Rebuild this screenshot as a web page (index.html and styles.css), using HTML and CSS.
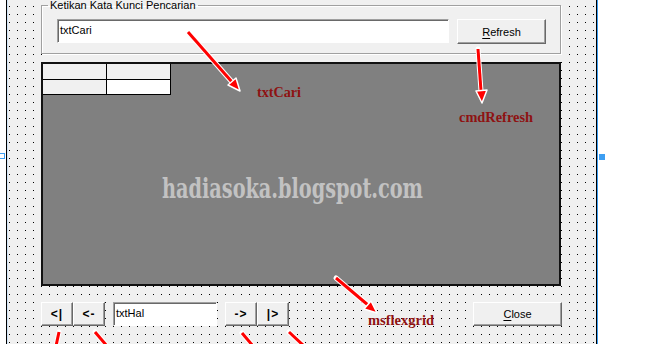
FILE: index.html
```html
<!DOCTYPE html>
<html lang="id">
<head>
    <meta charset="UTF-8">
    <title>frmCari - Design</title>
    <link rel="stylesheet" href="styles.css">
</head>
<body>
    <div class="designer">
        <div class="form">
            <!-- frame pencarian -->
            <fieldset class="frame">
                <legend>Ketikan Kata Kunci Pencarian</legend>
                <div class="search-row">
                    <div class="textbox txt-cari">txtCari</div>
                    <button class="btn btn-wide"><u>R</u>efresh</button>
                </div>
            </fieldset>

            <!-- msflexgrid -->
            <div class="flexgrid">
                <div class="cells">
                    <div class="cell fixed"></div>
                    <div class="cell fixed"></div>
                    <div class="cell fixed"></div>
                    <div class="cell"></div>
                </div>
            </div>

            <!-- navigasi halaman -->
            <div class="nav-row">
                <div class="btn-group">
                    <button class="btn btn-nav">&lt;|</button>
                    <button class="btn btn-nav">&lt;-</button>
                </div>
                <div class="textbox txt-hal">txtHal</div>
                <div class="btn-group">
                    <button class="btn btn-nav">-&gt;</button>
                    <button class="btn btn-nav">|&gt;</button>
                </div>
                <button class="btn btn-wide btn-close"><u>C</u>lose</button>
            </div>
        </div>

        <span class="handle handle-left"></span>
        <span class="handle handle-right"></span>

        <!-- keterangan (annotations) -->
        <svg class="notes" width="655" height="344" viewBox="0 0 655 344">
            <text class="watermark" x="162" y="198" textLength="261" lengthAdjust="spacingAndGlyphs">hadiasoka.blogspot.com</text>

            <g class="arrow-under">
                <line x1="188" y1="32" x2="232" y2="82"/>
                <line x1="478" y1="49" x2="481" y2="91"/>
                <line x1="336" y1="278" x2="368" y2="305"/>
                <line x1="59" y1="332" x2="56" y2="346"/>
                <line x1="95" y1="332" x2="107" y2="346"/>
                <line x1="242" y1="333" x2="253" y2="346"/>
                <line x1="289" y1="332" x2="304" y2="346"/>
            </g>
            <g class="arrow-line">
                <line x1="188" y1="32" x2="232" y2="82"/>
                <line x1="478" y1="49" x2="481" y2="91"/>
                <line x1="336" y1="278" x2="368" y2="305"/>
                <line x1="59" y1="332" x2="56" y2="346"/>
                <line x1="95" y1="332" x2="107" y2="346"/>
                <line x1="242" y1="333" x2="253" y2="346"/>
                <line x1="289" y1="332" x2="304" y2="346"/>
            </g>
            <g class="arrow-head">
                <polygon points="240,91 228,85 236,78"/>
                <polygon points="482,103 476,91 487,90"/>
                <polygon points="377,313 364,309 371,301"/>
            </g>

            <text class="note" x="257" y="97" textLength="44" lengthAdjust="spacingAndGlyphs">txtCari</text>
            <text class="note" x="459" y="122" textLength="74" lengthAdjust="spacingAndGlyphs">cmdRefresh</text>
            <text class="note" x="368" y="325" textLength="66" lengthAdjust="spacingAndGlyphs">msflexgrid</text>
        </svg>
    </div>
</body>
</html>
```

FILE: styles.css
```css
/* Global */
body {
    margin: 0;
    padding: 0;
    background-color: #fff;
    font-family: "Liberation Sans", Arial, sans-serif;
    font-size: 11px;
    overflow: hidden;
}

.designer {
    position: relative;
    width: 655px;
    height: 344px;
    padding-left: 6px;
    box-sizing: border-box;
}

/* the VB form with its grid dots */
.form {
    width: 591px;
    height: 344px;
    box-sizing: border-box;
    padding-left: 34px;
    border-left: 1px solid #000;
    border-right: 1px solid #000;
    box-shadow: 1px 0 0 #3d9ef2, inset 1px 0 0 #cfe4f7;
    background-color: #f0f0f0;
    background-image: url("data:image/svg+xml,%3Csvg xmlns='http://www.w3.org/2000/svg' width='8' height='8' shape-rendering='crispEdges'%3E%3Crect x='2' y='6' width='1' height='1' fill='%23000'/%3E%3C/svg%3E");
    background-size: 8px 8px;
    background-position: 0 0;
}

/* Frame */
.frame {
    width: 520px;
    box-sizing: border-box;
    margin: 0;
    min-width: 0;
    padding: 8px 6px 9px 6px;
    border: 1px solid #a0a0a0;
    box-shadow: inset 1px 1px 0 #fff, 1px 1px 0 #fff;
    background-color: #f0f0f0;
}

.frame legend {
    padding: 0 2px;
    line-height: 11px;
    color: #000;
}

.search-row {
    display: flex;
    align-items: flex-start;
    gap: 8px;
    margin-left: 9px;
}

/* Textbox */
.textbox {
    height: 24px;
    box-sizing: border-box;
    padding: 3px 0 0 2px;
    background-color: #fff;
    border: 1px solid;
    border-color: #a0a0a0 #fff #fff #a0a0a0;
    box-shadow: inset 1px 1px 0 #696969;
    line-height: 14px;
    color: #000;
}

.txt-cari {
    width: 392px;
}

.txt-hal {
    width: 104px;
}

/* Buttons */
.btn {
    height: 25px;
    padding: 0;
    box-sizing: border-box;
    font-family: "Liberation Sans", Arial, sans-serif;
    font-size: 11px;
    color: #000;
    background-color: #f0f0f0;
    border: 1px solid;
    border-color: #fff #696969 #696969 #fff;
    box-shadow: inset -1px -1px 0 #a0a0a0;
}

.btn-wide {
    width: 89px;
}

.btn-nav {
    width: 32px;
    height: 24px;
    font-size: 12px;
    font-weight: bold;
    letter-spacing: 1px;
}

.btn u {
    text-decoration-thickness: 1px;
    text-underline-offset: 2px;
}

/* MSFlexGrid */
.flexgrid {
    width: 520px;
    height: 224px;
    box-sizing: border-box;
    margin-top: 8px;
    border: 2px solid #111;
    background-color: #808080;
}

.cells {
    display: grid;
    grid-template-columns: 63px 63px;
    grid-template-rows: 15px 14px;
    gap: 1px;
    width: max-content;
    padding: 0 1px 1px 0;
    background-color: #000;
}

.cell {
    background-color: #fff;
}

.cell.fixed {
    background-color: #f0f0f0;
}

/* bottom navigation */
.nav-row {
    display: flex;
    align-items: flex-start;
    gap: 8px;
    width: 521px;
    margin-top: 16px;
}

.btn-group {
    display: flex;
}

.btn-close {
    margin-left: auto;
    height: 24px;
}

/* selection handles */
.handle {
    position: absolute;
    width: 6px;
    height: 6px;
    box-sizing: border-box;
}

.handle-left {
    left: -1px;
    top: 153px;
    border: 1px solid #3d9ef2;
    background-color: #fff;
}

.handle-right {
    left: 599px;
    top: 154px;
    background-color: #3d9ef2;
}

/* annotations */
.notes {
    position: absolute;
    left: 0;
    top: 0;
    pointer-events: none;
}

.watermark {
    font-family: "DejaVu Serif Condensed", "DejaVu Serif", serif;
    font-weight: bold;
    font-size: 28px;
    fill: #c2c2c2;
}

.arrow-under line {
    stroke: #fff;
    stroke-width: 5;
    stroke-linecap: round;
}

.arrow-line line {
    stroke: #f00;
    stroke-width: 3;
}

.arrow-head polygon {
    fill: #f00;
    stroke: #fff;
    stroke-width: 1.5;
    stroke-linejoin: round;
}

.note {
    font-family: "Liberation Serif", "Times New Roman", serif;
    font-weight: bold;
    font-size: 14px;
    fill: #8e1212;
}
```
